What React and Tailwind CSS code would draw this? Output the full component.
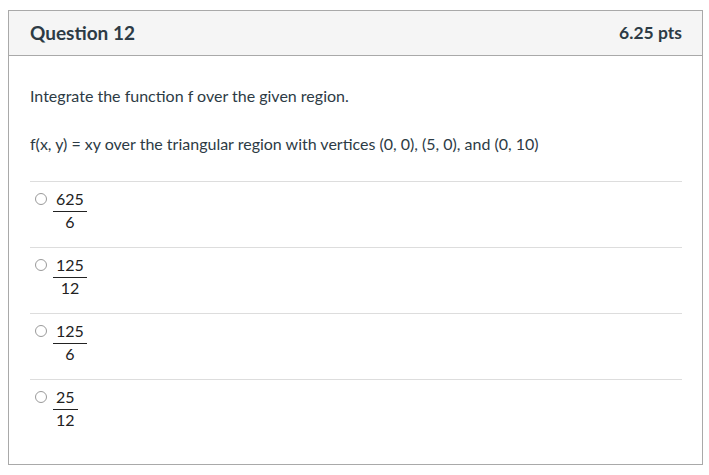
import React from "react";

function Radio() {
  return (
    <span className="mt-[4px] inline-block h-[12px] w-[12px] shrink-0 rounded-full border border-[#9a9a9a] bg-white" />
  );
}

function Frac({ num, den }) {
  return (
    <span className="inline-flex flex-col items-center text-[16px] leading-[20px] text-[#222222]">
      <span className="border-b border-[#222222] px-[3px] pb-[2px]">{num}</span>
      <span>{den}</span>
    </span>
  );
}

const options = [
  { num: "625", den: "6" },
  { num: "125", den: "12" },
  { num: "125", den: "6" },
  { num: "25", den: "12" },
];

export default function App() {
  return (
    <div className="h-[475px] w-[709px] bg-white pl-[8px] pt-[10px] font-['Lato','Open_Sans',sans-serif] text-[#2d3b45]">
      <div className="h-[455px] w-[695px] border border-[#a9a9a9]">
        <div className="flex h-[45px] items-center justify-between border-b border-[#a9a9a9] bg-[#f5f5f5] pl-[21px] pr-[20px]">
          <span className="text-[19px] font-bold">Question 12</span>
          <span className="text-[17.5px] font-bold text-[#2d3b45]">6.25 pts</span>
        </div>
        <div className="pl-[21px] pr-[20px] pt-[30px]">
          <p className="text-[16px] leading-[20px]">Integrate the function f over the given region.</p>
          <p className="mt-[28px] text-[16px] leading-[20px]">
            f(x, y) = xy over the triangular region with vertices (0, 0), (5, 0), and (0, 10)
          </p>
          <div className="mt-[27px]">
            {options.map((o, i) => (
              <div key={i} className="flex h-[66px] items-start gap-[6px] border-t border-[#dddddd] pl-[5px] pt-[7px]">
                <Radio />
                <Frac num={o.num} den={o.den} />
              </div>
            ))}
          </div>
        </div>
      </div>
    </div>
  );
}
